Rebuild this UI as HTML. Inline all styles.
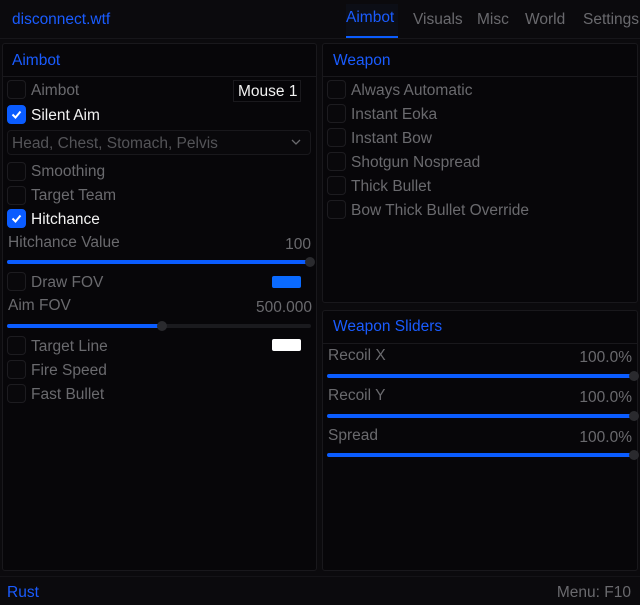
<!DOCTYPE html>
<html><head><meta charset="utf-8"><style>
*{margin:0;padding:0;box-sizing:border-box}
body{width:640px;height:605px;background:#0b0a0d;font-family:"Liberation Sans","Noto Sans CJK JP",sans-serif;font-size:15.5px;color:#6a6a6e;position:relative;overflow:hidden}
.a{position:absolute;white-space:nowrap;line-height:18px;margin-top:1px}
.blue{color:#1a5cff}
.w{color:#f2f2f2}
.panel{position:absolute;background:#070609;border:1px solid #19181c;border-radius:3px}
.hdr{position:absolute;left:0;right:0;top:32px;border-top:1px solid #19181c}
.cb{position:absolute;width:19px;height:19px;border:1px solid #1d1c20;border-radius:4px;background:#09080b}
.cb.on{background:#0a5cff;border-color:#0a5cff}
.tr{position:absolute;height:4px;border-radius:2px;background:#1a1a1e}
.fill{position:absolute;height:4px;border-radius:2px;background:#0a5cff}
.knob{position:absolute;width:10px;height:10px;border-radius:5px;background:#2a2a2e}
</style></head><body>
<div style="position:absolute;left:0;top:0;width:640px;height:39px;border-bottom:1px solid #17161a;background:#0b0a0d"></div>
<div class="a blue" style="left:12px;top:10px">disconnect.wtf</div>
<div style="position:absolute;left:346px;top:4px;width:52px;height:34px;background:#0c0e16"></div>
<div style="position:absolute;left:346px;top:36px;width:52px;height:2px;background:#0a5cff"></div>
<div class="a blue" style="left:346px;top:8px">Aimbot</div>
<div class="a" style="left:413px;top:10px">Visuals</div>
<div class="a" style="left:477px;top:10px">Misc</div>
<div class="a" style="left:525px;top:10px">World</div>
<div class="a" style="left:583px;top:10px">Settings</div>

<div class="panel" style="left:2px;top:43px;width:315px;height:528px"><div class="hdr"></div></div>
<div class="panel" style="left:322px;top:43px;width:316px;height:260px"><div class="hdr"></div></div>
<div class="panel" style="left:322px;top:310px;width:316px;height:261px"><div class="hdr"></div></div>
<div style="position:absolute;left:0;top:576px;width:640px;height:1px;background:#141317"></div>

<div class="a blue" style="left:12px;top:51px">Aimbot</div>
<div class="cb" style="left:7px;top:80px"></div><div class="a" style="left:31px;top:81px">Aimbot</div>
<div style="position:absolute;left:233px;top:80px;width:68px;height:22px;border:1px solid #1a191d;background:#050407"></div>
<div class="a w" style="left:238px;top:82px">Mouse 1</div>
<div class="cb on" style="left:7px;top:105px"><svg width="17" height="17" viewBox="0 0 17 17"><path d="M4.5 8.5l3 3 5-6" stroke="#fff" stroke-width="2" fill="none"/></svg></div>
<div class="a w" style="left:31px;top:106px">Silent Aim</div>
<div style="position:absolute;left:7px;top:130px;width:304px;height:25px;border:1px solid #19181c;border-radius:4px;background:#09080b"></div>
<div class="a" style="left:12px;top:134px;color:#545458">Head, Chest, Stomach, Pelvis</div>
<svg style="position:absolute;left:291px;top:139px" width="10" height="7"><path d="M1 1l4 4 4-4" stroke="#6a6a6e" stroke-width="1.3" fill="none"/></svg>
<div class="cb" style="left:7px;top:162px"></div><div class="a" style="left:31px;top:162px">Smoothing</div>
<div class="cb" style="left:7px;top:186px"></div><div class="a" style="left:31px;top:186px">Target Team</div>
<div class="cb on" style="left:7px;top:209px"><svg width="17" height="17" viewBox="0 0 17 17"><path d="M4.5 8.5l3 3 5-6" stroke="#fff" stroke-width="2" fill="none"/></svg></div>
<div class="a w" style="left:31px;top:210px">Hitchance</div>
<div class="a" style="left:8px;top:233px">Hitchance Value</div>
<div class="a" style="right:329px;top:235px">100</div>
<div class="tr" style="left:7px;top:260px;width:304px"></div><div class="fill" style="left:7px;top:260px;width:300px"></div>
<div class="knob" style="left:305px;top:257px"></div>
<div class="cb" style="left:7px;top:272px"></div><div class="a" style="left:31px;top:273px">Draw FOV</div>
<div style="position:absolute;left:272px;top:276px;width:29px;height:12px;border-radius:2px;background:#0a6aff"></div>
<div class="a" style="left:8px;top:296px">Aim FOV</div>
<div class="a" style="right:328px;top:298px">500.000</div>
<div class="tr" style="left:7px;top:324px;width:304px"></div><div class="fill" style="left:7px;top:324px;width:155px"></div>
<div class="knob" style="left:157px;top:321px"></div>
<div class="cb" style="left:7px;top:336px"></div><div class="a" style="left:31px;top:337px">Target Line</div>
<div style="position:absolute;left:272px;top:339px;width:29px;height:12px;border-radius:2px;background:#fff"></div>
<div class="cb" style="left:7px;top:360px"></div><div class="a" style="left:31px;top:361px">Fire Speed</div>
<div class="cb" style="left:7px;top:384px"></div><div class="a" style="left:31px;top:385px">Fast Bullet</div>

<div class="a blue" style="left:333px;top:51px">Weapon</div>
<div class="cb" style="left:327px;top:80px"></div><div class="a" style="left:351px;top:81px">Always Automatic</div>
<div class="cb" style="left:327px;top:104px"></div><div class="a" style="left:351px;top:105px">Instant Eoka</div>
<div class="cb" style="left:327px;top:128px"></div><div class="a" style="left:351px;top:129px">Instant Bow</div>
<div class="cb" style="left:327px;top:152px"></div><div class="a" style="left:351px;top:153px">Shotgun Nospread</div>
<div class="cb" style="left:327px;top:176px"></div><div class="a" style="left:351px;top:177px">Thick Bullet</div>
<div class="cb" style="left:327px;top:200px"></div><div class="a" style="left:351px;top:201px">Bow Thick Bullet Override</div>

<div class="a blue" style="left:333px;top:317px">Weapon Sliders</div>
<div class="a" style="left:328px;top:346px">Recoil X</div><div class="a" style="right:8px;top:348px">100.0%</div>
<div class="fill" style="left:327px;top:374px;width:306px"></div><div class="knob" style="left:629px;top:371px"></div>
<div class="a" style="left:328px;top:386px">Recoil Y</div><div class="a" style="right:8px;top:388px">100.0%</div>
<div class="fill" style="left:327px;top:414px;width:306px"></div><div class="knob" style="left:629px;top:411px"></div>
<div class="a" style="left:328px;top:426px">Spread</div><div class="a" style="right:8px;top:428px">100.0%</div>
<div class="fill" style="left:327px;top:453px;width:306px"></div><div class="knob" style="left:629px;top:450px"></div>

<div class="a blue" style="left:7px;top:583px">Rust</div>
<div class="a" style="right:9px;top:583px">Menu: F10</div>
</body></html>
